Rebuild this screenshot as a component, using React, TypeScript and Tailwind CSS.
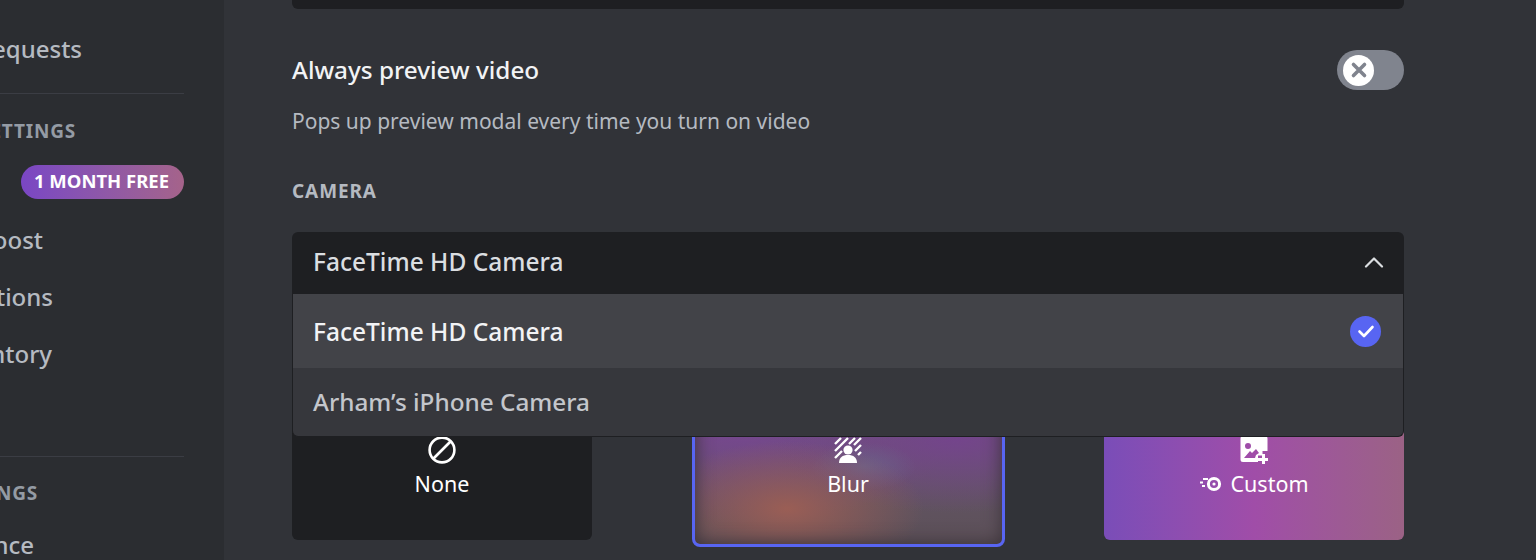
import type { ReactNode } from "react";

const navHeading = "flex h-6 justify-end text-[19px] leading-6 font-bold tracking-[0.8px] text-[#949ba4]";

// the window cuts the sidebar off at the left, so labels hang from their right end
function NavRow({ width, className = "", children }: { width: string; className?: string; children: ReactNode }) {
  return (
    <div className={`flex h-[57px] items-center justify-end text-[24px] font-medium text-[#b5bac1] ${width} ${className}`}>
      {children}
    </div>
  );
}

function CloseIcon() {
  return (
    <svg viewBox="0 0 20 20" className="h-5 w-5" fill="none" stroke="#80848e" strokeWidth="3.6" strokeLinecap="round">
      <path d="M4.500 4.500 15.500 15.500M15.500 4.500 4.500 15.500" />
    </svg>
  );
}

function Sidebar() {
  return (
    <aside className="h-full w-[224px] shrink-0 overflow-hidden bg-[#2b2d31]">
      <div className="w-[184px] whitespace-nowrap pt-[21px]">
        <NavRow width="w-[82px]" className="pb-[2px]">Friend Requests</NavRow>
        <div className="mt-[15px] h-px bg-[#3b3d44]" />
        <div className={`mt-[25px] w-[76px] ${navHeading}`}>BILLING SETTINGS</div>
        <div className="mt-[11px] flex h-[57px] items-center justify-end pb-[2px]">
          <span className="flex h-[34px] w-[163px] items-center justify-center rounded-full bg-linear-to-r from-[#7a46c4] to-[#a5638a] pb-[2px] pr-[2px] text-[18.500px] font-bold text-white">
            1 MONTH FREE
          </span>
        </div>
        <NavRow width="w-[43px]">Server Boost</NavRow>
        <NavRow width="w-[53px]">Subscriptions</NavRow>
        <NavRow width="w-[52px]">Gift Inventory</NavRow>
        <div className="h-[57px]" />
        <div className="mt-[17px] h-px bg-[#3b3d44]" />
        <div className={`mt-6 w-[38px] ${navHeading}`}>APP SETTINGS</div>
        <div className="mt-3">
          <NavRow width="w-[34px]" className="pb-[2px]">Appearance</NavRow>
        </div>
      </div>
    </aside>
  );
}

function CameraSelect() {
  return (
    <div className="relative z-10 mt-[29px]">
      <div className="flex h-[62px] items-center justify-between rounded-t-md bg-[#1e1f22] pb-[2px] pl-[21px] pr-5 text-[24.500px] font-medium text-[#dbdee1]">
        <span>FaceTime HD Camera</span>
        <svg viewBox="0 0 20 12" className="h-3 w-5" fill="none" stroke="#dbdee1" strokeWidth="2.200" strokeLinecap="round" strokeLinejoin="round">
          <path d="M2 10.500 10 2.500 18 10.500" />
        </svg>
      </div>
      <div className="absolute inset-x-0 top-full overflow-hidden rounded-b-md border border-t-0 border-[#1e1f22] bg-[#36373c]">
        <div className="flex h-[74px] items-center justify-between bg-[#424348] pl-5 pr-[22px] pt-[2px] text-[24.500px] font-medium text-[#f2f3f5]">
          <span>FaceTime HD Camera</span>
          <span className="-mt-[2px] flex h-[31px] w-[31px] items-center justify-center rounded-full bg-[#5865f2]">
            <svg viewBox="0 0 20 20" className="h-5 w-5" fill="none" stroke="white" strokeWidth="2.600" strokeLinecap="round" strokeLinejoin="round">
              <path d="M3.500 10.500 8 15 16.500 6" />
            </svg>
          </span>
        </div>
        <div className="flex h-[68px] items-center pl-5 text-[24.300px] font-medium text-[#c4c6cb]">Arham’s iPhone Camera</div>
      </div>
    </div>
  );
}

function BackgroundCards() {
  return (
    <div className="mt-[112px] flex h-[134px] justify-between">
      <div className="flex w-[300px] flex-col items-center justify-end gap-[6px] rounded-md bg-[#1e1f22] pb-[42px] text-white">
        <svg viewBox="0 0 28 28" className="h-7 w-7" fill="none" stroke="white" strokeWidth="2.600">
          <circle cx="14" cy="14" r="12.400" />
          <path d="M5.500 22.500 22.500 5.500" />
        </svg>
        <span className="text-[21.500px] leading-7">None</span>
      </div>
      <div className="-mt-[6px] -mb-[7px] box-content flex w-[307px] flex-col items-center justify-end gap-[5px] rounded-lg border-[3px] border-[#5865f2] bg-[radial-gradient(ellipse_at_30%_75%,#9a5e55_0%,transparent_45%),radial-gradient(ellipse_at_55%_45%,#6c5f88_0%,transparent_22%),radial-gradient(ellipse_at_85%_25%,#74448c_0%,transparent_50%),radial-gradient(ellipse_at_15%_10%,#784494_0%,transparent_60%),linear-gradient(#6a5a72,#5c5058)] pb-[46px] text-white shadow-[inset_0_0_18px_#3a3238]">
        <svg viewBox="0 0 28 28" className="h-7 w-7" fill="white">
          <path d="M1 7 7 1M1 14 14 1M1 21 8 14M21 1 15 7M27 1 20 8M27 8 21 14M27 15 24 18" stroke="white" strokeWidth="2.400" fill="none" />
          <circle cx="14" cy="13" r="4.600" />
          <path d="M5 26c0-5.500 3.600-8 9-8s9 2.500 9 8z" />
        </svg>
        <span className="text-[21.500px] leading-7">Blur</span>
      </div>
      <div className="flex w-[300px] flex-col items-center justify-end gap-[6px] rounded-md bg-linear-to-r from-[#7a4db8] via-[#a04da8] to-[#9b6285] pb-[42px] text-white">
        <svg viewBox="0 0 28 28" className="h-7 w-7" fill="white">
          <path fillRule="evenodd" d="M3 0h22a2.500 2.500 0 0 1 2.500 2.500V15h-5v4.500H18V26H3a2.500 2.500 0 0 1-2.500-2.500v-21A2.500 2.500 0 0 1 3 0Zm5 7a3 3 0 1 0 0 6 3 3 0 0 0 0-6ZM4 22h11l1-3 3-2-3-4-4 4-2-2z" />
          <path d="M22 18h3v4h3.500v3H25v3.500h-3V25h-4v-3h4z" />
        </svg>
        <span className="flex items-center gap-[7px] text-[21.500px] leading-7">
          <svg viewBox="0 0 24 16" className="h-4 w-6" fill="none" stroke="white">
            <circle cx="15" cy="8" r="5.600" strokeWidth="3" />
            <circle cx="15" cy="8" r="1.600" fill="white" stroke="none" />
            <path d="M1 6.500h3M4 3h5M3 10h3" strokeWidth="2" />
          </svg>
          Custom
        </span>
      </div>
    </div>
  );
}

export default function App() {
  return (
    <div className="flex h-[560px] w-full overflow-hidden bg-[#313338] [font-family:'Noto_Sans',sans-serif]">
      <Sidebar />
      <main className="flex-1 pl-[68px] pr-[132px]">
        <div className="h-[9px] rounded-b-md bg-[#1e1f22]" />
        <div className="mt-[41px] flex h-10 items-center justify-between">
          <span className="text-[24.300px] font-medium text-[#f2f3f5]">Always preview video</span>
          <span className="flex h-10 w-[67px] items-center rounded-full bg-[#80848e] pl-[6px]">
            <span className="flex h-[31px] w-[31px] items-center justify-center rounded-full bg-white">
              <CloseIcon />
            </span>
          </span>
        </div>
        <p className="mt-[17px] text-[21px] leading-7 text-[#b5bac1]">Pops up preview modal every time you turn on video</p>
        <h2 className="mt-11 h-6 text-[19px] leading-6 font-bold tracking-[0.9px] text-[#b5bac1]">CAMERA</h2>
        <CameraSelect />
        <BackgroundCards />
      </main>
    </div>
  );
}
